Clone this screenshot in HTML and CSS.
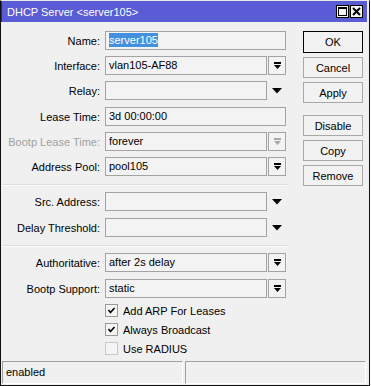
FILE: index.html
```html
<!DOCTYPE html>
<html lang="en">
<head>
    <meta charset="UTF-8">
    <title>DHCP Server &lt;server105&gt;</title>
    <link rel="stylesheet" href="styles.css">
</head>
<body>

<div class="window">
    <!-- Title bar -->
    <div class="titlebar">
        <span class="title">DHCP Server &lt;server105&gt;</span>
        <div class="title-buttons">
            <span class="tbtn"><svg width="9" height="9" viewBox="0 0 9 9"><rect x="0.5" y="0.5" width="8" height="8" fill="none" stroke="#000"/><rect x="0" y="0" width="9" height="2" fill="#000"/></svg></span>
            <span class="tbtn"><svg width="9" height="9" viewBox="0 0 9 9"><path d="M1 1 L8 8 M8 1 L1 8" stroke="#000" stroke-width="2"/></svg></span>
        </div>
    </div>

    <div class="main">
        <div class="form">
            <div class="group">
                <div class="row">
                    <label class="label">Name:</label>
                    <div class="field full"><span class="selected">server105</span></div>
                </div>
                <div class="row">
                    <label class="label">Interface:</label>
                    <div class="field">vlan105-AF88</div>
                    <span class="drop"><svg width="7" height="8" viewBox="0 0 7 8"><rect x="0" y="0" width="7" height="2"/><polygon points="0,3 7,3 3.5,7"/></svg></span>
                </div>
                <div class="row">
                    <label class="label">Relay:</label>
                    <div class="field"></div>
                    <span class="arrow"><svg width="10" height="6" viewBox="0 0 10 6"><polygon points="0,0 10,0 5,5.5"/></svg></span>
                </div>
                <div class="row step">
                    <label class="label">Lease Time:</label>
                    <div class="field full">3d 00:00:00</div>
                </div>
                <div class="row">
                    <label class="label disabled">Bootp Lease Time:</label>
                    <div class="field">forever</div>
                    <span class="drop off"><svg width="7" height="8" viewBox="0 0 7 8"><rect x="0" y="0" width="7" height="2"/><polygon points="0,3 7,3 3.5,7"/></svg></span>
                </div>
                <div class="row">
                    <label class="label">Address Pool:</label>
                    <div class="field">pool105</div>
                    <span class="drop"><svg width="7" height="8" viewBox="0 0 7 8"><rect x="0" y="0" width="7" height="2"/><polygon points="0,3 7,3 3.5,7"/></svg></span>
                </div>
            </div>

            <div class="sep"></div>

            <div class="group wide">
                <div class="row">
                    <label class="label">Src. Address:</label>
                    <div class="field"></div>
                    <span class="arrow"><svg width="10" height="6" viewBox="0 0 10 6"><polygon points="0,0 10,0 5,5.5"/></svg></span>
                </div>
                <div class="row">
                    <label class="label">Delay Threshold:</label>
                    <div class="field"></div>
                    <span class="arrow"><svg width="10" height="6" viewBox="0 0 10 6"><polygon points="0,0 10,0 5,5.5"/></svg></span>
                </div>
            </div>

            <div class="sep"></div>

            <div class="group wide">
                <div class="row">
                    <label class="label">Authoritative:</label>
                    <div class="field">after 2s delay</div>
                    <span class="drop"><svg width="7" height="8" viewBox="0 0 7 8"><rect x="0" y="0" width="7" height="2"/><polygon points="0,3 7,3 3.5,7"/></svg></span>
                </div>
                <div class="row">
                    <label class="label">Bootp Support:</label>
                    <div class="field">static</div>
                    <span class="drop"><svg width="7" height="8" viewBox="0 0 7 8"><rect x="0" y="0" width="7" height="2"/><polygon points="0,3 7,3 3.5,7"/></svg></span>
                </div>
            </div>

            <div class="checks">
                <div class="check">
                    <span class="box on"><svg width="11" height="11" viewBox="0 0 11 11"><polyline points="2.5,5 4.5,7.5 8.5,3" fill="none" stroke="#000" stroke-width="1.6"/></svg></span>
                    <span>Add ARP For Leases</span>
                </div>
                <div class="check">
                    <span class="box on"><svg width="11" height="11" viewBox="0 0 11 11"><polyline points="2.5,5 4.5,7.5 8.5,3" fill="none" stroke="#000" stroke-width="1.6"/></svg></span>
                    <span>Always Broadcast</span>
                </div>
                <div class="check">
                    <span class="box"></span>
                    <span>Use RADIUS</span>
                </div>
            </div>
        </div>

        <!-- Right side buttons -->
        <div class="actions">
            <button class="btn default">OK</button>
            <button class="btn">Cancel</button>
            <button class="btn">Apply</button>
            <button class="btn spaced">Disable</button>
            <button class="btn">Copy</button>
            <button class="btn">Remove</button>
        </div>
    </div>

    <div class="statusbar">
        <div class="panel first">enabled</div>
        <div class="panel"></div>
    </div>
</div>

</body>
</html>
```

FILE: styles.css
```css
body {
    margin: 0;
    background: #fff;
    font-family: "Liberation Sans", Arial, sans-serif;
    font-size: 11px;
    color: #000;
}
.window {
    width: 370px;
    height: 386px;
    box-sizing: border-box;
    border: 1px solid #111;
    border-top-color: #e8e8e8;
    background: #f0f0f0;
    display: flex;
    flex-direction: column;
}
.titlebar {
    height: 21px;
    margin: 0 2px 0 0;
    background: #5a5cd6;
    border-left: 1px solid #333;
    display: flex;
    align-items: center;
    justify-content: space-between;
}
.title {
    color: #fff;
    padding-left: 5px;
}
.title-buttons {
    display: flex;
    gap: 1px;
    padding-right: 4px;
}
.tbtn {
    width: 13px;
    height: 13px;
    box-sizing: border-box;
    border: 1px solid #000;
    background: #f4f4f4;
    display: flex;
    align-items: center;
    justify-content: center;
}
.main {
    display: flex;
    padding: 9px 0 0 1px;
}
.form {
    width: 286px;
}
.group {
    display: flex;
    flex-direction: column;
    gap: 6px;
}
.group.wide {
    gap: 7px;
}
.row {
    display: flex;
    align-items: center;
    height: 19px;
}
.row.step {
    margin-top: 1px;
}
.label {
    width: 98px;
    margin-right: 5px;
    text-align: right;
    white-space: nowrap;
}
.label.disabled {
    color: #a0a0a0;
}
.field {
    width: 162px;
    height: 19px;
    box-sizing: border-box;
    border: 1px solid #a3a3a3;
    background: #f3f3f3;
    line-height: 17px;
    padding-left: 3px;
    white-space: nowrap;
}
.field.full {
    width: 181px;
}
.selected {
    background: #4391de;
    color: #fff;
    padding: 1px 0;
}
.drop {
    width: 18px;
    height: 19px;
    box-sizing: border-box;
    margin-left: 1px;
    border: 1px solid #a3a3a3;
    background: #f3f3f3;
    display: flex;
    align-items: center;
    justify-content: center;
}
.drop svg {
    fill: #000;
}
.drop.off svg {
    fill: #a8a8a8;
}
.arrow {
    width: 18px;
    margin-left: 1px;
    display: flex;
    justify-content: center;
    padding-top: 1px;
}
.arrow svg {
    fill: #000;
}
.sep {
    margin: 8px 0 6px 0;
    border-top: 1px solid #dedede;
    border-bottom: 1px solid #fbfbfb;
}
.checks {
    margin-top: 3px;
}
.check {
    height: 19px;
    display: flex;
    align-items: center;
    padding-left: 103px;
}
.box {
    width: 13px;
    height: 13px;
    box-sizing: border-box;
    border: 1px solid #9a9a9a;
    background: #f5f5f5;
    margin-right: 5px;
    display: flex;
    align-items: center;
    justify-content: center;
}
.box:not(.on) {
    border-color: #c8c8c8;
}
.actions {
    margin-left: 15px;
    display: flex;
    flex-direction: column;
    gap: 4px;
}
.btn {
    width: 60px;
    height: 21px;
    padding: 0;
    border: 1px solid #a8a8a8;
    background: #f2f2f2;
    font-family: "Liberation Sans", Arial, sans-serif;
    font-size: 11px;
    color: #000;
}
.btn.default {
    height: 22px;
    border-color: #000;
}
.btn.spaced {
    margin-top: 8px;
}
.statusbar {
    margin-top: auto;
    margin-bottom: 1px;
    display: flex;
    gap: 2px;
    padding: 0 3px 0 1px;
}
.panel {
    height: 23px;
    box-sizing: border-box;
    border: 1px solid #a0a0a0;
    border-right-color: #fff;
    border-bottom-color: #fff;
    line-height: 21px;
    padding-left: 3px;
    flex: 1;
}
.panel.first {
    flex: none;
    width: 181px;
}
```
